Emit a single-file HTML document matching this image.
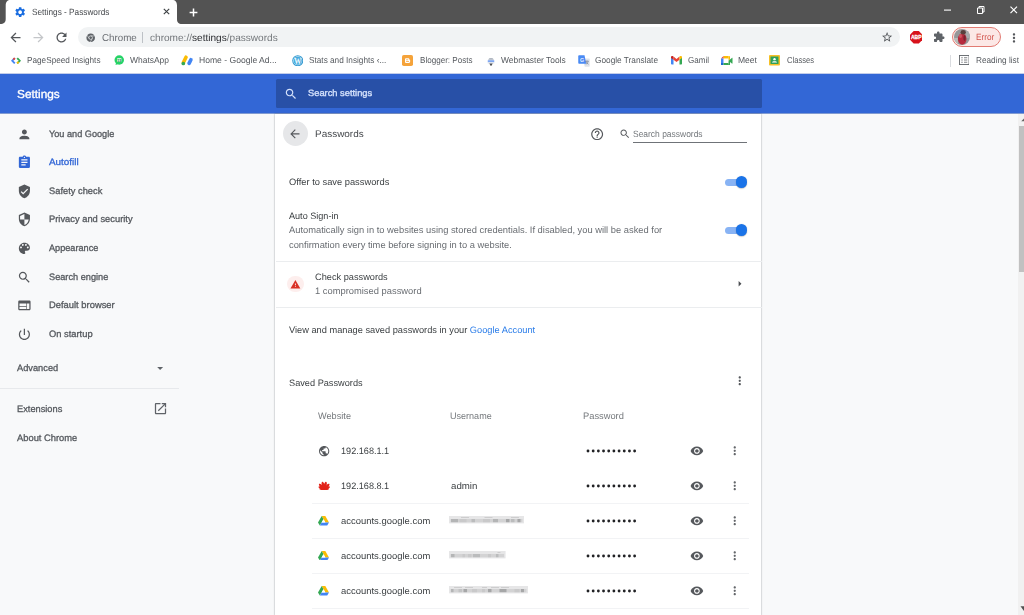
<!DOCTYPE html><html lang="en"><head><meta charset="utf-8"><title>Settings - Passwords</title><style>
html,body{margin:0;padding:0;background:#f8f9fa;overflow:hidden}#app{position:relative;width:1024px;height:615px;overflow:hidden;font-family:"Liberation Sans", sans-serif;}#app>div,#app>svg,#app>span{position:absolute;display:block}#app>span{white-space:nowrap;line-height:1;transform-origin:0 50%;text-rendering:geometricPrecision}
</style></head><body><div id="app">
<div style="left:0px;top:0px;width:1024px;height:24px;background:#535353"></div>
<svg style="left:0;top:0" width="190" height="25" viewBox="0 0 190 25"><path fill="#fff" d="M0 24 C4 24 5.700 22.500 5.700 19 V5.500 C5.700 2 7.200 0 10.700 0 H172 C175.5 0 177 2 177 5.5 V19 C177 22.5 178.5 24 182 24 V25 H0 Z"/></svg>
<svg style="left:13.95px;top:5.80px;" width="12.3" height="12.3" viewBox="0 0 24 24"><path fill="#1a6de0" d="M19.14 12.94c.04-.3.06-.61.06-.94 0-.32-.02-.64-.07-.94l2.03-1.58c.18-.14.23-.41.12-.61l-1.92-3.32c-.12-.22-.37-.29-.59-.22l-2.39.96c-.5-.38-1.03-.7-1.62-.94l-.36-2.54c-.04-.24-.24-.41-.48-.41h-3.84c-.24 0-.43.17-.47.41l-.36 2.54c-.59.24-1.13.57-1.62.94l-2.39-.96c-.22-.08-.47 0-.59.22L2.74 8.87c-.12.21-.08.47.12.61l2.03 1.58c-.05.3-.09.63-.09.94s.02.64.07.94l-2.03 1.58c-.18.14-.23.41-.12.61l1.92 3.32c.12.22.37.29.59.22l2.39-.96c.5.38 1.03.7 1.62.94l.36 2.54c.05.24.24.41.48.41h3.84c.24 0 .44-.17.47-.41l.36-2.54c.59-.24 1.13-.56 1.62-.94l2.39.96c.22.08.47 0 .59-.22l1.92-3.32c.12-.22.07-.47-.12-.61l-2.01-1.58zM12 15.6c-1.98 0-3.6-1.62-3.6-3.6s1.62-3.6 3.6-3.6 3.6 1.62 3.6 3.6-1.62 3.6-3.6 3.6z"/></svg>
<svg style="left:162.500px;top:8.100px" width="7" height="7" viewBox="0 0 7 7"><path d="M.8 .8 L6.2 6.2 M6.2 .8 L.8 6.2" stroke="#3c4043" stroke-width="1.15" fill="none"/></svg>
<svg style="left:188.600px;top:7.650px" width="9" height="9" viewBox="0 0 9 9"><path d="M4.5 .6 V8.4 M.6 4.5 H8.4" stroke="#fff" stroke-width="1.5" fill="none"/></svg>
<svg style="left:940px;top:3.400px" width="84" height="16" viewBox="0 0 84 16"><path d="M4 7.100 H11" stroke="#fff" stroke-width="1.100" fill="none"/><path d="M37.5 5 H42.5 V10.5 H37.5 Z M39 5 V3.5 H44 V9 H42.5" stroke="#fff" stroke-width="1" fill="none"/><path d="M70.5 3.700 L77 10.200 M77 3.700 L70.500 10.200" stroke="#fff" stroke-width="1.200" fill="none"/></svg>
<div style="left:0px;top:24px;width:1024px;height:26.5px;background:#fff"></div>
<svg style="left:8.10px;top:29.75px;" width="15" height="15" viewBox="0 0 24 24"><path fill="#54575b" d="M20 11H7.83l5.59-5.59L12 4l-8 8 8 8 1.41-1.41L7.83 13H20v-2z"/></svg>
<svg style="left:30.75px;top:29.75px;" width="15" height="15" viewBox="0 0 24 24"><path fill="#c4c6c9" d="M12 4l-1.41 1.41L16.17 11H4v2h12.17l-5.58 5.59L12 20l8-8z"/></svg>
<svg style="left:54.10px;top:29.75px;" width="15" height="15" viewBox="0 0 24 24"><path fill="#54575b" d="M17.65 6.35C16.2 4.9 14.21 4 12 4c-4.42 0-7.99 3.58-7.99 8s3.57 8 7.99 8c3.73 0 6.84-2.55 7.73-6h-2.08c-.82 2.33-3.04 4-5.65 4-3.31 0-6-2.69-6-6s2.69-6 6-6c1.66 0 3.14.69 4.22 1.78L13 11h7V4l-2.35 2.35z"/></svg>
<div style="left:78px;top:27.2px;width:821.8px;height:19.6px;background:#f1f3f4;border-radius:10px"></div>
<svg style="left:85.500px;top:32.500px" width="9.400" height="9.400" viewBox="0 0 24 24"><circle cx="12" cy="12" r="11" fill="#5f6368"/><circle cx="12" cy="12" r="4.6" fill="#5f6368" stroke="#f1f3f4" stroke-width="1.6"/><path d="M12 7.4 H22 M8 14.3 L3 5.7 M16 14.3 L11 23" stroke="#f1f3f4" stroke-width="1.4" fill="none"/></svg>
<div style="left:142px;top:31.5px;width:1px;height:11px;background:#bdc1c6"></div>
<svg style="left:881.00px;top:31.00px;" width="12.2" height="12.2" viewBox="0 0 24 24"><path fill="#4f5256" d="M22 9.24l-7.19-.62L12 2 9.19 8.63 2 9.24l5.46 4.73L5.82 21 12 17.27 18.18 21l-1.63-7.03L22 9.24zM12 15.4l-3.76 2.27 1-4.28-3.32-2.88 4.38-.38L12 6.1l1.71 4.04 4.38.38-3.32 2.88 1 4.28L12 15.4z"/></svg>
<svg style="left:909.5px;top:31px" width="12.5" height="12.5" viewBox="0 0 24 24"><path d="M7.03 0 H16.97 L24 7.03 V16.97 L16.97 24 H7.03 L0 16.97 V7.03 Z" fill="#d8121b"/><text x="12" y="16" font-family="Liberation Sans, sans-serif" font-weight="700" font-size="11" text-anchor="middle" fill="#fff" stroke="#fff" stroke-width=".5" textLength="20.500" lengthAdjust="spacingAndGlyphs">ABP</text></svg>
<svg style="left:933.00px;top:31.20px;" width="12" height="12" viewBox="0 0 24 24"><path fill="#5f6368" d="M20.5 11H19V7c0-1.1-.9-2-2-2h-4V3.5C13 2.12 11.88 1 10.5 1S8 2.12 8 3.5V5H4c-1.1 0-1.99.9-1.99 2v3.8H3.5c1.49 0 2.7 1.21 2.7 2.7s-1.21 2.7-2.7 2.7H2V20c0 1.1.9 2 2 2h3.8v-1.5c0-1.49 1.21-2.7 2.7-2.7 1.49 0 2.7 1.21 2.7 2.7V22H17c1.1 0 2-.9 2-2v-4h1.5c1.38 0 2.5-1.12 2.5-2.5S21.88 11 20.5 11z"/></svg>
<div style="left:952px;top:27.2px;width:49px;height:19.8px;background:#fce8e6;border:1px solid #e27b73;border-radius:10px;box-sizing:border-box"></div>
<svg style="left:954px;top:28.900px" width="16" height="16" viewBox="0 0 16 16"><defs><clipPath id="av"><circle cx="8" cy="8" r="8"/></clipPath><filter id="avb" x="-20%" y="-20%" width="140%" height="140%"><feGaussianBlur stdDeviation="0.7"/></filter></defs><g clip-path="url(#av)"><rect width="16" height="16" fill="#969698"/><g filter="url(#avb)"><rect x="-1" y="9" width="5" height="8" fill="#b9bbb8"/><rect x="12" y="2" width="5" height="7" fill="#a9aaab"/><ellipse cx="8.200" cy="10" rx="4.300" ry="5.800" fill="#b82c3e"/><ellipse cx="6.500" cy="7" rx="1.500" ry="2" fill="#cf5560"/><ellipse cx="9.200" cy="3.200" rx="2.600" ry="2.200" fill="#5a3f3c"/><ellipse cx="10.500" cy="9" rx="1.200" ry="3" fill="#7a2430"/></g></g></svg>
<svg style="left:1007.10px;top:30.50px;" width="14" height="14" viewBox="0 0 24 24"><path fill="#54575b" d="M12 8c1.1 0 2-.9 2-2s-.9-2-2-2-2 .9-2 2 .9 2 2 2zm0 2c-1.1 0-2 .9-2 2s.9 2 2 2 2-.9 2-2-.9-2-2-2zm0 6c-1.1 0-2 .9-2 2s.9 2 2 2 2-.9 2-2-.9-2-2-2z"/></svg>
<div style="left:0px;top:50.5px;width:1024px;height:23px;background:#fff"></div>
<svg style="left:10.7px;top:56.5px" width="10" height="7.500" viewBox="0 0 21 17" preserveAspectRatio="none"><path d="M8 2.500 L2.500 8.500 L8 14.500" stroke="#4285f4" stroke-width="4" fill="none"/><path d="M8 2.500 L5 5.800" stroke="#ea4335" stroke-width="4" fill="none"/><path d="M13 2.500 L18.500 8.500 L13 14.500" stroke="#34a853" stroke-width="4" fill="none"/><path d="M13 14.500 L16 11.200" stroke="#fbbc05" stroke-width="4" fill="none"/></svg>
<svg style="left:113.5px;top:55px" width="10.5" height="10.5" viewBox="0 0 21 21"><circle cx="10.5" cy="10" r="9.5" fill="#25d366"/><path d="M3 20 L4.5 14.5 L8.5 18.2 Z" fill="#25d366"/><rect x="6" y="6" width="9" height="8" rx="1.500" fill="#c9f3d8"/><text x="10.500" y="13" font-family="Liberation Sans, sans-serif" font-weight="700" font-size="7" text-anchor="middle" fill="#0f7f3e">13</text></svg>
<svg style="left:181px;top:54.5px" width="12.5" height="11" viewBox="0 0 25 22"><path d="M10 4.500 L5 14.500" stroke="#fbbc04" stroke-width="7.200" stroke-linecap="round" fill="none"/><path d="M19.800 9.500 L16.200 16.800" stroke="#4285f4" stroke-width="7.200" stroke-linecap="round" fill="none"/><circle cx="4.600" cy="17" r="3.700" fill="#34a853"/></svg>
<svg style="left:291.5px;top:54.7px" width="11.5" height="11.5" viewBox="0 0 23 23"><circle cx="11.500" cy="11.500" r="11" fill="#2f97cf"/><circle cx="11.500" cy="11.500" r="9" fill="#dff1fa"/><circle cx="11.500" cy="11.500" r="8" fill="#46abdf"/><text x="11.500" y="17" font-family="Liberation Serif, serif" font-weight="700" font-size="15.500" text-anchor="middle" fill="#eef8fd" textLength="15" lengthAdjust="spacingAndGlyphs">W</text></svg>
<svg style="left:402px;top:55px" width="11" height="11" viewBox="0 0 22 22"><rect width="22" height="22" rx="3.5" fill="#f5a33a"/><path d="M8 6.5 H12 C14 6.5 15 7.8 15 9.3 C16 9.6 16.3 10.2 16.3 11 V13 C16.3 14.8 15 16 13.3 16 H8.6 C7 16 6 14.9 6 13.4 V9 C6 7.5 7 6.5 8 6.5 Z" fill="#fff"/><path d="M9 9.6 H11.6 M9 13 H13.2" stroke="#f5a33a" stroke-width="1.5" stroke-linecap="round"/></svg>
<svg style="left:485.5px;top:55.5px" width="10" height="10.5" viewBox="0 0 20 21"><path d="M4.500 7.500 C4.500 2.500 15.500 2.500 15.500 7.500 V9 H4.500 Z" fill="#c3c9d3"/><rect x="3.500" y="8.500" width="13" height="4" fill="#7ea6f2"/><rect x="3.500" y="12.500" width="13" height="2.500" fill="#dde1e7"/><path d="M6.500 15 L10 20.500 L13.500 15 Z" fill="#4a4d52"/><path d="M6.500 5.500 H13.500" stroke="#9aa1ad" stroke-width="1.200"/></svg>
<svg style="left:577.5px;top:54.5px" width="12" height="12" viewBox="0 0 24 24"><path d="M9 7 H21.5 C22.6 7 23.5 7.9 23.5 9 V21.5 C23.5 22.6 22.6 23.5 21.5 23.5 H13.5 Z" fill="#dfe3ea"/><path d="M2.5 .5 H13 L16.5 17.5 H2.5 C1.4 17.5 .5 16.6 .5 15.5 V2.5 C.5 1.4 1.4 .5 2.500 .5 Z" fill="#4a8af4"/><text x="8" y="13.2" font-family="Liberation Sans, sans-serif" font-weight="700" font-size="10.5" text-anchor="middle" fill="#e9f0ff">G</text><path d="M14.5 12.5 H21.5 M18 11 V12.5 M16 12.7 C16.8 15.6 19 17.6 21 18.6 M20.3 12.7 C19.6 15.6 17.600 17.800 15.600 18.800" stroke="#6b7686" stroke-width="1.2" fill="none"/></svg>
<svg style="left:670.5px;top:56px" width="11" height="8.5" viewBox="0 0 22 17"><path d="M0 2.5 V15.5 C0 16.300 .7 17 1.500 17 H5 V7.5 Z" fill="#4285f4"/><path d="M22 2.5 V15.5 C22 16.300 21.300 17 20.500 17 H17 V7.500 Z" fill="#34a853"/><path d="M5 7.5 V1.200 L11 5.800 L17 1.200 V7.500 L11 12 Z" fill="#ea4335"/><path d="M0 2.500 C0 .4 2.300 -.6 4 .6 L5 1.300 V7.500 L0 3.800 Z" fill="#c5221f"/><path d="M22 2.500 C22 .4 19.700 -.6 18 .6 L17 1.300 V7.500 L22 3.800 Z" fill="#fbbc04"/></svg>
<svg style="left:721px;top:55.7px" width="11.5" height="9.5" viewBox="0 0 23 19"><path d="M5 0 H15 V5 H5 Z" fill="#fbbc04"/><path d="M0 5 L5 0 V5 Z" fill="#ea4335"/><path d="M0 5 H5 V14 H0 Z" fill="#4285f4"/><path d="M0 14 H5 V19 H1.500 C.7 19 0 18.300 0 17.500 Z" fill="#1967d2"/><path d="M5 14 H15 V16.500 L17.500 19 H5 Z" fill="#34a853"/><path d="M15 0 H16.500 C17.300 0 18 .7 18 1.500 V7 L15 9.500 Z" fill="#fbbc04"/><path d="M15 9.500 L21.700 3.800 C22.200 3.400 23 3.700 23 4.400 V14.600 C23 15.300 22.200 15.600 21.700 15.200 L18 12 V17.500 C18 18.300 17.300 19 16.500 19 H15 Z" fill="#34a853"/><path d="M5.800 5.800 H14.200 V13.200 H5.800 Z" fill="#fff"/></svg>
<svg style="left:769px;top:55.3px" width="11" height="10.5" viewBox="0 0 22 21"><rect width="22" height="21" rx="2" fill="#f6c026"/><rect x="3" y="3" width="16" height="15" fill="#2ea05b"/><circle cx="11" cy="8.300" r="2.400" fill="#fff"/><path d="M6 15 C6 11.500 16 11.500 16 15 Z" fill="#fff"/></svg>
<div style="left:950px;top:55px;width:1px;height:11.5px;background:#dadce0"></div>
<svg style="left:958.5px;top:55.3px" width="10.5" height="10" viewBox="0 0 21 20"><rect x=".9" y=".9" width="19.200" height="18.200" fill="none" stroke="#5f6368" stroke-width="1.800"/><path d="M4.500 5.500 H7.500 M4.500 10 H7.500 M4.500 14.500 H7.500 M10 5.500 H16.500 M10 10 H16.500 M10 14.500 H16.500" stroke="#5f6368" stroke-width="1.600" fill="none"/></svg>
<div style="left:0px;top:73px;width:1024px;height:0.8px;background:#c3cdea"></div>
<div style="left:0px;top:113.5px;width:1024px;height:502px;background:#f8f9fa"></div>
<div style="left:0px;top:73.8px;width:1024px;height:39.7px;background:#3367d6"></div>
<div style="left:0px;top:113.2px;width:1024px;height:1.2px;background:linear-gradient(#2d58b4,rgba(180,195,225,.5))"></div>
<div style="left:275.8px;top:79.3px;width:486.2px;height:28.8px;background:#2850a7;border-radius:1.5px"></div>
<svg style="left:284.10px;top:86.90px;" width="14" height="14" viewBox="0 0 24 24"><path fill="#d5e2fb" d="M15.5 14h-.79l-.28-.27C15.41 12.59 16 11.11 16 9.5 16 5.91 13.09 3 9.5 3S3 5.91 3 9.5 5.91 16 9.5 16c1.61 0 3.09-.59 4.23-1.57l.27.28v.79l5 4.99L20.49 19l-4.99-5zm-6 0C7.01 14 5 11.99 5 9.5S7.01 5 9.5 5 14 7.01 14 9.5 11.99 14 9.5 14z"/></svg>
<svg style="left:17.00px;top:126.80px;" width="14.8" height="14.8" viewBox="0 0 24 24"><path fill="#55585c" d="M12 12c2.21 0 4-1.79 4-4s-1.79-4-4-4-4 1.79-4 4 1.79 4 4 4zm0 2c-2.67 0-8 1.34-8 4v2h16v-2c0-2.66-5.33-4-8-4z"/></svg>
<svg style="left:17.00px;top:155.30px;" width="14.8" height="14.8" viewBox="0 0 24 24"><path fill="#3367d6" d="M19 3h-4.18C14.4 1.84 13.3 1 12 1c-1.3 0-2.4.84-2.82 2H5c-1.1 0-2 .9-2 2v14c0 1.1.9 2 2 2h14c1.1 0 2-.9 2-2V5c0-1.1-.9-2-2-2zm-7 0c.55 0 1 .45 1 1s-.45 1-1 1-1-.45-1-1 .45-1 1-1zm2 14H7v-2h7v2zm3-4H7v-2h10v2zm0-4H7V7h10v2z"/></svg>
<svg style="left:17.00px;top:183.80px;" width="14.8" height="14.8" viewBox="0 0 24 24"><path fill="#55585c" d="M12 1L3 5v6c0 5.55 3.84 10.74 9 12 5.16-1.26 9-6.45 9-12V5l-9-4zm-2 16l-4-4 1.41-1.41L10 14.17l6.59-6.59L18 9l-8 8z"/></svg>
<svg style="left:17.00px;top:212.30px;" width="14.8" height="14.8" viewBox="0 0 24 24"><path fill="#55585c" d="M12 1L3 5v6c0 5.55 3.84 10.74 9 12 5.16-1.26 9-6.45 9-12V5l-9-4zm0 10.99h7c-.53 4.12-3.28 7.79-7 8.94V12H5V6.3l7-3.11v8.8z"/></svg>
<svg style="left:17.00px;top:241.00px;" width="14.8" height="14.8" viewBox="0 0 24 24"><path fill="#55585c" d="M12 3c-4.97 0-9 4.03-9 9s4.03 9 9 9c.83 0 1.5-.67 1.5-1.5 0-.39-.15-.74-.39-1.01-.23-.26-.38-.61-.38-.99 0-.83.67-1.5 1.5-1.5H16c2.76 0 5-2.24 5-5 0-4.42-4.03-8-9-8zm-5.5 9c-.83 0-1.5-.67-1.5-1.5S5.67 9 6.5 9 8 9.67 8 10.5 7.33 12 6.5 12zm3-4C8.67 8 8 7.33 8 6.5S8.67 5 9.5 5s1.5.67 1.5 1.5S10.33 8 9.5 8zm5 0c-.83 0-1.5-.67-1.5-1.5S13.67 5 14.5 5s1.5.67 1.5 1.5S15.33 8 14.5 8zm3 4c-.83 0-1.5-.67-1.5-1.5S16.67 9 17.5 9s1.5.67 1.5 1.5-.67 1.5-1.5 1.5z"/></svg>
<svg style="left:17.00px;top:269.70px;" width="14.8" height="14.8" viewBox="0 0 24 24"><path fill="#55585c" d="M15.5 14h-.79l-.28-.27C15.41 12.59 16 11.11 16 9.5 16 5.91 13.09 3 9.5 3S3 5.91 3 9.5 5.91 16 9.5 16c1.61 0 3.09-.59 4.23-1.57l.27.28v.79l5 4.99L20.49 19l-4.99-5zm-6 0C7.01 14 5 11.99 5 9.5S7.01 5 9.5 5 14 7.01 14 9.5 11.99 14 9.5 14z"/></svg>
<svg style="left:17.00px;top:297.90px;" width="14.8" height="14.8" viewBox="0 0 24 24"><path fill="#55585c" d="M20 4H4c-1.1 0-1.99.9-1.99 2L2 18c0 1.1.9 2 2 2h16c1.1 0 2-.9 2-2V6c0-1.1-.9-2-2-2zm-5 14H4v-4h11v4zm0-5H4V9h11v4zm5 5h-4V9h4v9z"/></svg>
<svg style="left:17.00px;top:326.60px;" width="14.8" height="14.8" viewBox="0 0 24 24"><path fill="#55585c" d="M13 3h-2v10h2V3zm4.83 2.17l-1.42 1.42C17.99 7.86 19 9.81 19 12c0 3.87-3.13 7-7 7s-7-3.13-7-7c0-2.19 1.01-4.14 2.58-5.42L6.17 5.17C4.23 6.82 3 9.26 3 12c0 4.97 4.03 9 9 9s9-4.03 9-9c0-2.74-1.23-5.18-3.17-6.83z"/></svg>
<svg style="left:152.65px;top:360.85px;" width="14.3" height="14.3" viewBox="0 0 24 24"><path fill="#5f6368" d="M7 10l5 5 5-5z"/></svg>
<div style="left:0px;top:388.1px;width:179.3px;height:0.9px;background:#e7e9ec"></div>
<svg style="left:152.70px;top:401.40px;" width="15" height="15" viewBox="0 0 24 24"><path fill="#5f6368" d="M19 19H5V5h7V3H5c-1.11 0-2 .9-2 2v14c0 1.1.89 2 2 2h14c1.1 0 2-.9 2-2v-7h-2v7zM14 3v2h3.59l-9.83 9.83 1.41 1.41L19 6.41V10h2V3h-7z"/></svg>
<div style="left:274.9px;top:113.5px;width:486.3px;height:502px;background:#fff;box-shadow:0 0 0 .8px rgba(60,64,67,.10),0 0 2.200px rgba(60,64,67,.22)"></div>
<div style="left:282.5px;top:121px;width:25.4px;height:25.4px;background:#e6e7e9;border-radius:50%"></div>
<svg style="left:288.40px;top:127.10px;" width="13.8" height="13.8" viewBox="0 0 24 24"><path fill="#55585c" d="M20 11H7.83l5.59-5.59L12 4l-8 8 8 8 1.41-1.41L7.83 13H20v-2z"/></svg>
<svg style="left:589.85px;top:126.75px;" width="14.3" height="14.3" viewBox="0 0 24 24"><path fill="#55585c" d="M11 18h2v-2h-2v2zm1-16C6.48 2 2 6.48 2 12s4.48 10 10 10 10-4.48 10-10S17.52 2 12 2zm0 18c-4.41 0-8-3.59-8-8s3.59-8 8-8 8 3.59 8 8-3.59 8-8 8zm0-14c-2.21 0-4 1.79-4 4h2c0-1.1.9-2 2-2s2 .9 2 2c0 2-3 1.75-3 5h2c0-2.25 3-2.5 3-5 0-2.21-1.79-4-4-4z"/></svg>
<svg style="left:618.50px;top:128.00px;" width="11.8" height="11.8" viewBox="0 0 24 24"><path fill="#55585c" d="M15.5 14h-.79l-.28-.27C15.41 12.59 16 11.11 16 9.5 16 5.91 13.09 3 9.5 3S3 5.91 3 9.5 5.91 16 9.5 16c1.61 0 3.09-.59 4.23-1.57l.27.28v.79l5 4.99L20.49 19l-4.99-5zm-6 0C7.01 14 5 11.99 5 9.5S7.01 5 9.5 5 14 7.01 14 9.5 11.99 14 9.5 14z"/></svg>
<div style="left:632.9px;top:142px;width:114.5px;height:0.9px;background:#6f7378"></div>
<div style="left:724.8px;top:178.7px;width:20px;height:7px;background:#88b3f4;border-radius:3.500px"></div>
<div style="left:735.5px;top:176.29999999999998px;width:11.8px;height:11.8px;background:#1a73e8;border-radius:50%;box-shadow:0 .5px 1.200px rgba(0,0,0,.35)"></div>
<div style="left:724.8px;top:226.7px;width:20px;height:7px;background:#88b3f4;border-radius:3.500px"></div>
<div style="left:735.5px;top:224.29999999999998px;width:11.8px;height:11.8px;background:#1a73e8;border-radius:50%;box-shadow:0 .5px 1.200px rgba(0,0,0,.35)"></div>
<div style="left:275.5px;top:261px;width:486.5px;height:0.9px;background:#ebedef"></div>
<div style="left:287.2px;top:275.6px;width:16.6px;height:16.6px;background:#fdeeed;border-radius:50%"></div>
<svg style="left:290.00px;top:278.50px;" width="10.8" height="10.8" viewBox="0 0 24 24"><path fill="#d93025" d="M1 21h22L12 2 1 21zm12-3h-2v-2h2v2zm0-4h-2v-4h2v4z"/></svg>
<svg style="left:732.55px;top:277.25px;" width="13.5" height="13.5" viewBox="0 0 24 24"><path fill="#4a4d51" d="M10 17l5-5-5-5v10z"/></svg>
<div style="left:275.5px;top:306.5px;width:486.5px;height:0.9px;background:#ebedef"></div>
<svg style="left:732.85px;top:373.85px;" width="13.5" height="13.5" viewBox="0 0 24 24"><path fill="#55585c" d="M12 8c1.1 0 2-.9 2-2s-.9-2-2-2-2 .9-2 2 .9 2 2 2zm0 2c-1.1 0-2 .9-2 2s.9 2 2 2 2-.9 2-2-.9-2-2-2zm0 6c-1.1 0-2 .9-2 2s.9 2 2 2 2-.9 2-2-.9-2-2-2z"/></svg>
<svg style="left:317.85px;top:444.65px;" width="12.3" height="12.3" viewBox="0 0 24 24"><path fill="#55585c" d="M12 2C6.48 2 2 6.48 2 12s4.48 10 10 10 10-4.48 10-10S17.52 2 12 2zm-1 17.93c-3.95-.49-7-3.85-7-7.93 0-.62.08-1.21.21-1.79L9 15v1c0 1.1.9 2 2 2v1.93zm6.9-2.54c-.26-.81-1-1.39-1.9-1.39h-1v-3c0-.55-.45-1-1-1H8v-2h2c.55 0 1-.45 1-1V7h2c1.1 0 2-.9 2-2v-.41c2.93 1.19 5 4.06 5 7.41 0 2.08-.8 3.97-2.1 5.39z"/></svg>
<svg style="left:585.600px;top:448.7px" width="52" height="4" viewBox="0 0 52 4" fill="#202124"><circle cx="2.00" cy="2" r="1.420"/><circle cx="7.18" cy="2" r="1.420"/><circle cx="12.36" cy="2" r="1.420"/><circle cx="17.54" cy="2" r="1.420"/><circle cx="22.72" cy="2" r="1.420"/><circle cx="27.90" cy="2" r="1.420"/><circle cx="33.08" cy="2" r="1.420"/><circle cx="38.26" cy="2" r="1.420"/><circle cx="43.44" cy="2" r="1.420"/><circle cx="48.62" cy="2" r="1.420"/></svg>
<svg style="left:690.10px;top:443.80px;" width="13.8" height="13.8" viewBox="0 0 24 24"><path fill="#55585c" d="M12 4.5C7 4.5 2.73 7.61 1 12c1.73 4.39 6 7.5 11 7.5s9.27-3.11 11-7.5c-1.73-4.39-6-7.5-11-7.5zM12 17c-2.76 0-5-2.24-5-5s2.24-5 5-5 5 2.24 5 5-2.24 5-5 5zm0-8c-1.66 0-3 1.34-3 3s1.34 3 3 3 3-1.34 3-3-1.34-3-3-3z"/></svg>
<svg style="left:727.95px;top:443.95px;" width="13.5" height="13.5" viewBox="0 0 24 24"><path fill="#63666a" d="M12 8c1.1 0 2-.9 2-2s-.9-2-2-2-2 .9-2 2 .9 2 2 2zm0 2c-1.1 0-2 .9-2 2s.9 2 2 2 2-.9 2-2-.9-2-2-2zm0 6c-1.1 0-2 .9-2 2s.9 2 2 2 2-.9 2-2-.9-2-2-2z"/></svg>
<svg style="left:317.8px;top:480.8px" width="12.4" height="9.3" viewBox="0 0 24 18"><g fill="#e2231a"><ellipse cx="12" cy="9.00" rx="2.7" ry="8.00" transform="rotate(13 12 17)"/><ellipse cx="12" cy="9.00" rx="2.7" ry="8.00" transform="rotate(-13 12 17)"/><ellipse cx="12" cy="9.50" rx="2.7" ry="7.50" transform="rotate(40 12 17)"/><ellipse cx="12" cy="9.50" rx="2.7" ry="7.50" transform="rotate(-40 12 17)"/><ellipse cx="12" cy="10.75" rx="2.3" ry="6.25" transform="rotate(62 12 17)"/><ellipse cx="12" cy="10.75" rx="2.3" ry="6.25" transform="rotate(-62 12 17)"/><ellipse cx="12" cy="12.25" rx="1.5" ry="4.75" transform="rotate(79 12 17)"/><ellipse cx="12" cy="12.25" rx="1.5" ry="4.75" transform="rotate(-79 12 17)"/></g></svg>
<svg style="left:585.600px;top:483.59999999999997px" width="52" height="4" viewBox="0 0 52 4" fill="#202124"><circle cx="2.00" cy="2" r="1.420"/><circle cx="7.18" cy="2" r="1.420"/><circle cx="12.36" cy="2" r="1.420"/><circle cx="17.54" cy="2" r="1.420"/><circle cx="22.72" cy="2" r="1.420"/><circle cx="27.90" cy="2" r="1.420"/><circle cx="33.08" cy="2" r="1.420"/><circle cx="38.26" cy="2" r="1.420"/><circle cx="43.44" cy="2" r="1.420"/><circle cx="48.62" cy="2" r="1.420"/></svg>
<svg style="left:690.10px;top:478.70px;" width="13.8" height="13.8" viewBox="0 0 24 24"><path fill="#55585c" d="M12 4.5C7 4.5 2.73 7.61 1 12c1.73 4.39 6 7.5 11 7.5s9.27-3.11 11-7.5c-1.73-4.39-6-7.5-11-7.5zM12 17c-2.76 0-5-2.24-5-5s2.24-5 5-5 5 2.24 5 5-2.24 5-5 5zm0-8c-1.66 0-3 1.34-3 3s1.34 3 3 3 3-1.34 3-3-1.34-3-3-3z"/></svg>
<svg style="left:727.95px;top:478.85px;" width="13.5" height="13.5" viewBox="0 0 24 24"><path fill="#63666a" d="M12 8c1.1 0 2-.9 2-2s-.9-2-2-2-2 .9-2 2 .9 2 2 2zm0 2c-1.1 0-2 .9-2 2s.9 2 2 2 2-.9 2-2-.9-2-2-2zm0 6c-1.1 0-2 .9-2 2s.9 2 2 2 2-.9 2-2-.9-2-2-2z"/></svg>
<svg style="left:318.3px;top:515.8000000000001px" width="11" height="9.800" viewBox="0 0 22 19.600"><path d="M7.400 0 H14.600 L22 12.800 H14.800 Z" fill="#fbbc04"/><path d="M7.400 0 L0 12.800 L3.600 19.100 L11 6.300 Z" fill="#34a853"/><path d="M7.200 12.800 H22 L18.400 19.100 H3.600 Z" fill="#4285f4"/><path d="M11 6.300 L7.200 12.800 H14.800 Z" fill="#fff"/></svg>
<svg style="left:447.000px;top:514.20px;overflow:visible" width="79.0" height="11.400" viewBox="-2 -2 79.0 11.400"><filter id="b520" x="-5%" y="-40%" width="110%" height="180%"><feGaussianBlur stdDeviation="0.45"/></filter><g filter="url(#b520)"><rect x="0" y="0" width="75.0" height="7.400" fill="#e6e6e7"/><rect x="1.5" y="3" width="72.0" height="3.200" fill="#d3d3d4"/><rect x="2.0" y="3" width="7" height="3.200" fill="#b4b5b6"/><rect x="10.5" y="3" width="7" height="3.200" fill="#c9c9ca"/><rect x="12.0" y="1" width="8" height="1" fill="#cdcdce"/><rect x="22.5" y="3" width="3.5" height="3.200" fill="#bbbcbd"/><rect x="34.0" y="3" width="7" height="3.200" fill="#c9c9ca"/><rect x="35.5" y="1" width="8" height="1" fill="#cdcdce"/><rect x="44.0" y="3" width="5" height="3.200" fill="#b4b5b6"/><rect x="57.0" y="3" width="3.5" height="3.200" fill="#a6a7a8"/><rect x="62.0" y="3" width="3.5" height="3.200" fill="#bbbcbd"/><rect x="62.0" y="1" width="8" height="1" fill="#cdcdce"/><rect x="68.5" y="3" width="3" height="3.200" fill="#a6a7a8"/></g></svg>
<svg style="left:585.600px;top:518.6px" width="52" height="4" viewBox="0 0 52 4" fill="#202124"><circle cx="2.00" cy="2" r="1.420"/><circle cx="7.18" cy="2" r="1.420"/><circle cx="12.36" cy="2" r="1.420"/><circle cx="17.54" cy="2" r="1.420"/><circle cx="22.72" cy="2" r="1.420"/><circle cx="27.90" cy="2" r="1.420"/><circle cx="33.08" cy="2" r="1.420"/><circle cx="38.26" cy="2" r="1.420"/><circle cx="43.44" cy="2" r="1.420"/><circle cx="48.62" cy="2" r="1.420"/></svg>
<svg style="left:690.10px;top:513.70px;" width="13.8" height="13.8" viewBox="0 0 24 24"><path fill="#55585c" d="M12 4.5C7 4.5 2.73 7.61 1 12c1.73 4.39 6 7.5 11 7.5s9.27-3.11 11-7.5c-1.73-4.39-6-7.5-11-7.5zM12 17c-2.76 0-5-2.24-5-5s2.24-5 5-5 5 2.24 5 5-2.24 5-5 5zm0-8c-1.66 0-3 1.34-3 3s1.34 3 3 3 3-1.34 3-3-1.34-3-3-3z"/></svg>
<svg style="left:727.95px;top:513.85px;" width="13.5" height="13.5" viewBox="0 0 24 24"><path fill="#63666a" d="M12 8c1.1 0 2-.9 2-2s-.9-2-2-2-2 .9-2 2 .9 2 2 2zm0 2c-1.1 0-2 .9-2 2s.9 2 2 2 2-.9 2-2-.9-2-2-2zm0 6c-1.1 0-2 .9-2 2s.9 2 2 2 2-.9 2-2-.9-2-2-2z"/></svg>
<svg style="left:318.3px;top:550.7px" width="11" height="9.800" viewBox="0 0 22 19.600"><path d="M7.400 0 H14.600 L22 12.800 H14.800 Z" fill="#fbbc04"/><path d="M7.400 0 L0 12.800 L3.600 19.100 L11 6.300 Z" fill="#34a853"/><path d="M7.200 12.800 H22 L18.400 19.100 H3.600 Z" fill="#4285f4"/><path d="M11 6.300 L7.200 12.800 H14.800 Z" fill="#fff"/></svg>
<svg style="left:447.000px;top:549.10px;overflow:visible" width="60.6" height="11.400" viewBox="-2 -2 60.6 11.400"><filter id="b555" x="-5%" y="-40%" width="110%" height="180%"><feGaussianBlur stdDeviation="0.45"/></filter><g filter="url(#b555)"><rect x="0" y="0" width="56.6" height="7.400" fill="#e6e6e7"/><rect x="1.5" y="3" width="53.6" height="3.200" fill="#d3d3d4"/><rect x="2.0" y="3" width="3.5" height="3.200" fill="#b4b5b6"/><rect x="13.5" y="3" width="2.5" height="3.200" fill="#c9c9ca"/><rect x="19.0" y="3" width="3.5" height="3.200" fill="#c9c9ca"/><rect x="24.0" y="3" width="7" height="3.200" fill="#bbbcbd"/><rect x="39.0" y="3" width="3" height="3.200" fill="#c9c9ca"/><rect x="47.0" y="3" width="2.5" height="3.200" fill="#bbbcbd"/><rect x="48.5" y="1" width="3" height="1" fill="#cdcdce"/></g></svg>
<svg style="left:585.600px;top:553.5px" width="52" height="4" viewBox="0 0 52 4" fill="#202124"><circle cx="2.00" cy="2" r="1.420"/><circle cx="7.18" cy="2" r="1.420"/><circle cx="12.36" cy="2" r="1.420"/><circle cx="17.54" cy="2" r="1.420"/><circle cx="22.72" cy="2" r="1.420"/><circle cx="27.90" cy="2" r="1.420"/><circle cx="33.08" cy="2" r="1.420"/><circle cx="38.26" cy="2" r="1.420"/><circle cx="43.44" cy="2" r="1.420"/><circle cx="48.62" cy="2" r="1.420"/></svg>
<svg style="left:690.10px;top:548.60px;" width="13.8" height="13.8" viewBox="0 0 24 24"><path fill="#55585c" d="M12 4.5C7 4.5 2.73 7.61 1 12c1.73 4.39 6 7.5 11 7.5s9.27-3.11 11-7.5c-1.73-4.39-6-7.5-11-7.5zM12 17c-2.76 0-5-2.24-5-5s2.24-5 5-5 5 2.24 5 5-2.24 5-5 5zm0-8c-1.66 0-3 1.34-3 3s1.34 3 3 3 3-1.34 3-3-1.34-3-3-3z"/></svg>
<svg style="left:727.95px;top:548.75px;" width="13.5" height="13.5" viewBox="0 0 24 24"><path fill="#63666a" d="M12 8c1.1 0 2-.9 2-2s-.9-2-2-2-2 .9-2 2 .9 2 2 2zm0 2c-1.1 0-2 .9-2 2s.9 2 2 2 2-.9 2-2-.9-2-2-2zm0 6c-1.1 0-2 .9-2 2s.9 2 2 2 2-.9 2-2-.9-2-2-2z"/></svg>
<svg style="left:318.3px;top:585.9px" width="11" height="9.800" viewBox="0 0 22 19.600"><path d="M7.400 0 H14.600 L22 12.800 H14.800 Z" fill="#fbbc04"/><path d="M7.400 0 L0 12.800 L3.600 19.100 L11 6.300 Z" fill="#34a853"/><path d="M7.200 12.800 H22 L18.400 19.100 H3.600 Z" fill="#4285f4"/><path d="M11 6.300 L7.200 12.800 H14.800 Z" fill="#fff"/></svg>
<svg style="left:447.000px;top:584.30px;overflow:visible" width="83.0" height="11.400" viewBox="-2 -2 83.0 11.400"><filter id="b590" x="-5%" y="-40%" width="110%" height="180%"><feGaussianBlur stdDeviation="0.45"/></filter><g filter="url(#b590)"><rect x="0" y="0" width="79.0" height="7.400" fill="#e6e6e7"/><rect x="1.5" y="3" width="76.0" height="3.200" fill="#d3d3d4"/><rect x="2.0" y="3" width="2.5" height="3.200" fill="#b4b5b6"/><rect x="5.0" y="1" width="8" height="1" fill="#cdcdce"/><rect x="9.5" y="3" width="3.5" height="3.200" fill="#c2c3c4"/><rect x="14.5" y="3" width="3.5" height="3.200" fill="#a6a7a8"/><rect x="16.0" y="1" width="8" height="1" fill="#cdcdce"/><rect x="23.0" y="3" width="5" height="3.200" fill="#c9c9ca"/><rect x="33.0" y="3" width="3" height="3.200" fill="#c9c9ca"/><rect x="33.0" y="1" width="5" height="1" fill="#cdcdce"/><rect x="39.0" y="3" width="3.5" height="3.200" fill="#a6a7a8"/><rect x="42.0" y="1" width="8" height="1" fill="#cdcdce"/><rect x="50.5" y="3" width="7" height="3.200" fill="#a6a7a8"/><rect x="52.0" y="1" width="8" height="1" fill="#cdcdce"/><rect x="65.5" y="3" width="5" height="3.200" fill="#c9c9ca"/><rect x="72.0" y="3" width="3" height="3.200" fill="#a6a7a8"/></g></svg>
<svg style="left:585.600px;top:588.6999999999999px" width="52" height="4" viewBox="0 0 52 4" fill="#202124"><circle cx="2.00" cy="2" r="1.420"/><circle cx="7.18" cy="2" r="1.420"/><circle cx="12.36" cy="2" r="1.420"/><circle cx="17.54" cy="2" r="1.420"/><circle cx="22.72" cy="2" r="1.420"/><circle cx="27.90" cy="2" r="1.420"/><circle cx="33.08" cy="2" r="1.420"/><circle cx="38.26" cy="2" r="1.420"/><circle cx="43.44" cy="2" r="1.420"/><circle cx="48.62" cy="2" r="1.420"/></svg>
<svg style="left:690.10px;top:583.80px;" width="13.8" height="13.8" viewBox="0 0 24 24"><path fill="#55585c" d="M12 4.5C7 4.5 2.73 7.61 1 12c1.73 4.39 6 7.5 11 7.5s9.27-3.11 11-7.5c-1.73-4.39-6-7.5-11-7.5zM12 17c-2.76 0-5-2.24-5-5s2.24-5 5-5 5 2.24 5 5-2.24 5-5 5zm0-8c-1.66 0-3 1.34-3 3s1.34 3 3 3 3-1.34 3-3-1.34-3-3-3z"/></svg>
<svg style="left:727.95px;top:583.95px;" width="13.5" height="13.5" viewBox="0 0 24 24"><path fill="#63666a" d="M12 8c1.1 0 2-.9 2-2s-.9-2-2-2-2 .9-2 2 .9 2 2 2zm0 2c-1.1 0-2 .9-2 2s.9 2 2 2 2-.9 2-2-.9-2-2-2zm0 6c-1.1 0-2 .9-2 2s.9 2 2 2 2-.9 2-2-.9-2-2-2z"/></svg>
<div style="left:312px;top:503.2px;width:437px;height:0.9px;background:#f2f3f5"></div>
<div style="left:312px;top:538.1px;width:437px;height:0.9px;background:#f2f3f5"></div>
<div style="left:312px;top:573.1px;width:437px;height:0.9px;background:#f2f3f5"></div>
<div style="left:312px;top:608px;width:437px;height:0.9px;background:#f2f3f5"></div>
<div style="left:1017.9px;top:113.5px;width:6.1px;height:502px;background:#f1f1f1"></div>
<div style="left:1019.1px;top:126px;width:4.9px;height:146.1px;background:#c1c1c1"></div>
<svg style="left:1020.500px;top:118px" width="3.500" height="3.500" viewBox="0 0 4 4"><path d="M.3 3.700 L3.700 .3 L4 .3 V3.700 Z" fill="#606060"/></svg>
<svg style="left:1020px;top:605.500px" width="4" height="6" viewBox="0 0 4 6"><path d="M.5 .3 H4 V5 Z" fill="#505050"/></svg>
<span class="t" style="left:31.60px;top:8.00px;font-size:9px;color:#45484c;font-weight:400;transform:scaleX(0.9155);">Settings - Passwords</span>
<span class="t" style="left:101.80px;top:34.00px;font-size:10px;color:#6a6e73;font-weight:400;transform:scaleX(0.9753);">Chrome</span>
<span class="t" style="left:149.80px;top:34.00px;font-size:10px;color:#74787c;font-weight:400;transform:scaleX(1.0076);">chrome://<span style="color:#2a2c30">settings</span>/passwords</span>
<span class="t" style="left:975.80px;top:33.00px;font-size:9px;color:#d2544d;font-weight:400;transform:scaleX(0.9100);">Error</span>
<span class="t" style="left:27.30px;top:56.00px;font-size:8.7px;color:#55595e;font-weight:400;transform:scaleX(0.9451);">PageSpeed Insights</span>
<span class="t" style="left:130.30px;top:56.00px;font-size:8.7px;color:#55595e;font-weight:400;transform:scaleX(0.9731);">WhatsApp</span>
<span class="t" style="left:198.80px;top:56.00px;font-size:8.7px;color:#55595e;font-weight:400;transform:scaleX(0.9871);">Home - Google Ad...</span>
<span class="t" style="left:309.00px;top:56.00px;font-size:8.7px;color:#55595e;font-weight:400;transform:scaleX(0.9472);">Stats and Insights ‹...</span>
<span class="t" style="left:419.80px;top:56.00px;font-size:8.7px;color:#55595e;font-weight:400;transform:scaleX(0.9292);">Blogger: Posts</span>
<span class="t" style="left:501.30px;top:56.00px;font-size:8.7px;color:#55595e;font-weight:400;transform:scaleX(0.9686);">Webmaster Tools</span>
<span class="t" style="left:595.30px;top:56.00px;font-size:8.7px;color:#55595e;font-weight:400;transform:scaleX(0.9521);">Google Translate</span>
<span class="t" style="left:688.00px;top:56.00px;font-size:8.7px;color:#55595e;font-weight:400;transform:scaleX(0.9256);">Gamil</span>
<span class="t" style="left:738.30px;top:56.00px;font-size:8.7px;color:#55595e;font-weight:400;transform:scaleX(0.9830);">Meet</span>
<span class="t" style="left:787.00px;top:56.00px;font-size:8.7px;color:#55595e;font-weight:400;transform:scaleX(0.8736);">Classes</span>
<span class="t" style="left:976.00px;top:56.00px;font-size:8.7px;color:#55595e;font-weight:400;transform:scaleX(0.9470);">Reading list</span>
<span class="t" style="left:17.20px;top:89.00px;font-size:11.6px;color:#fff;font-weight:400;transform:scaleX(1.0213);font-weight:400;-webkit-text-stroke:.35px #fff">Settings</span>
<span class="t" style="left:308.00px;top:89.00px;font-size:9.1px;color:#d3e0fb;font-weight:400;transform:scaleX(1.0241);-webkit-text-stroke:.35px #d3e0fb">Search settings</span>
<span class="t" style="left:48.70px;top:130.00px;font-size:9.3px;color:#55595e;font-weight:400;transform:scaleX(0.9840);-webkit-text-stroke:.3px #55595e">You and Google</span>
<span class="t" style="left:48.70px;top:158.00px;font-size:9.3px;color:#3367d6;font-weight:400;transform:scaleX(1.0643);-webkit-text-stroke:.3px #3367d6">Autofill</span>
<span class="t" style="left:48.70px;top:187.00px;font-size:9.3px;color:#55595e;font-weight:400;transform:scaleX(1.0012);-webkit-text-stroke:.3px #55595e">Safety check</span>
<span class="t" style="left:48.70px;top:215.00px;font-size:9.3px;color:#55595e;font-weight:400;transform:scaleX(1.0050);-webkit-text-stroke:.3px #55595e">Privacy and security</span>
<span class="t" style="left:48.70px;top:244.00px;font-size:9.3px;color:#55595e;font-weight:400;transform:scaleX(0.9832);-webkit-text-stroke:.3px #55595e">Appearance</span>
<span class="t" style="left:48.70px;top:273.00px;font-size:9.3px;color:#55595e;font-weight:400;transform:scaleX(0.9888);-webkit-text-stroke:.3px #55595e">Search engine</span>
<span class="t" style="left:48.70px;top:301.00px;font-size:9.3px;color:#55595e;font-weight:400;transform:scaleX(1.0091);-webkit-text-stroke:.3px #55595e">Default browser</span>
<span class="t" style="left:48.70px;top:330.00px;font-size:9.3px;color:#55595e;font-weight:400;transform:scaleX(1.0041);-webkit-text-stroke:.3px #55595e">On startup</span>
<span class="t" style="left:17.00px;top:364.00px;font-size:9.3px;color:#55595e;font-weight:400;transform:scaleX(0.9961);-webkit-text-stroke:.3px #55595e">Advanced</span>
<span class="t" style="left:17.00px;top:405.00px;font-size:9.3px;color:#55595e;font-weight:400;transform:scaleX(0.9959);-webkit-text-stroke:.3px #55595e">Extensions</span>
<span class="t" style="left:17.00px;top:434.00px;font-size:9.3px;color:#55595e;font-weight:400;transform:scaleX(1.0058);-webkit-text-stroke:.3px #55595e">About Chrome</span>
<span class="t" style="left:315.30px;top:130.00px;font-size:9.6px;color:#45484c;font-weight:400;transform:scaleX(1.0379);">Passwords</span>
<span class="t" style="left:632.90px;top:130.00px;font-size:9.1px;color:#74787c;font-weight:400;transform:scaleX(0.9303);">Search passwords</span>
<span class="t" style="left:289.20px;top:178.00px;font-size:9.3px;color:#3c4043;font-weight:400;transform:scaleX(1.0022);">Offer to save passwords</span>
<span class="t" style="left:289.20px;top:212.00px;font-size:9.3px;color:#3c4043;font-weight:400;transform:scaleX(0.9772);">Auto Sign-in</span>
<span class="t" style="left:289.20px;top:226.00px;font-size:9.3px;color:#696d72;font-weight:400;transform:scaleX(1.0044);">Automatically sign in to websites using stored credentials. If disabled, you will be asked for</span>
<span class="t" style="left:289.20px;top:241.00px;font-size:9.3px;color:#696d72;font-weight:400;transform:scaleX(1.0050);">confirmation every time before signing in to a website.</span>
<span class="t" style="left:315.30px;top:273.00px;font-size:9.3px;color:#3c4043;font-weight:400;transform:scaleX(0.9908);">Check passwords</span>
<span class="t" style="left:315.30px;top:287.00px;font-size:9.3px;color:#696d72;font-weight:400;transform:scaleX(1.0063);">1 compromised password</span>
<span class="t" style="left:289.20px;top:326.00px;font-size:9.3px;color:#3c4043;font-weight:400;transform:scaleX(0.9951);">View and manage saved passwords in your <span style="color:#2b7de9">Google Account</span></span>
<span class="t" style="left:289.20px;top:379.00px;font-size:9.3px;color:#3c4043;font-weight:400;transform:scaleX(0.9890);">Saved Passwords</span>
<span class="t" style="left:318.00px;top:412.00px;font-size:9.3px;color:#74787c;font-weight:400;transform:scaleX(0.9874);">Website</span>
<span class="t" style="left:450.30px;top:412.00px;font-size:9.3px;color:#74787c;font-weight:400;transform:scaleX(0.9722);">Username</span>
<span class="t" style="left:582.70px;top:412.00px;font-size:9.3px;color:#74787c;font-weight:400;transform:scaleX(1.0018);">Password</span>
<span class="t" style="left:341.10px;top:447.00px;font-size:9.3px;color:#3c4043;font-weight:400;transform:scaleX(0.9812);">192.168.1.1</span>
<span class="t" style="left:341.10px;top:482.00px;font-size:9.3px;color:#3c4043;font-weight:400;transform:scaleX(0.9812);">192.168.8.1</span>
<span class="t" style="left:450.80px;top:482.00px;font-size:9.3px;color:#3c4043;font-weight:400;transform:scaleX(1.0423);">admin</span>
<span class="t" style="left:341.10px;top:517.00px;font-size:9.3px;color:#3c4043;font-weight:400;transform:scaleX(1.0164);">accounts.google.com</span>
<span class="t" style="left:341.10px;top:552.00px;font-size:9.3px;color:#3c4043;font-weight:400;transform:scaleX(1.0164);">accounts.google.com</span>
<span class="t" style="left:341.10px;top:587.00px;font-size:9.3px;color:#3c4043;font-weight:400;transform:scaleX(1.0164);">accounts.google.com</span>
</div></body></html>
